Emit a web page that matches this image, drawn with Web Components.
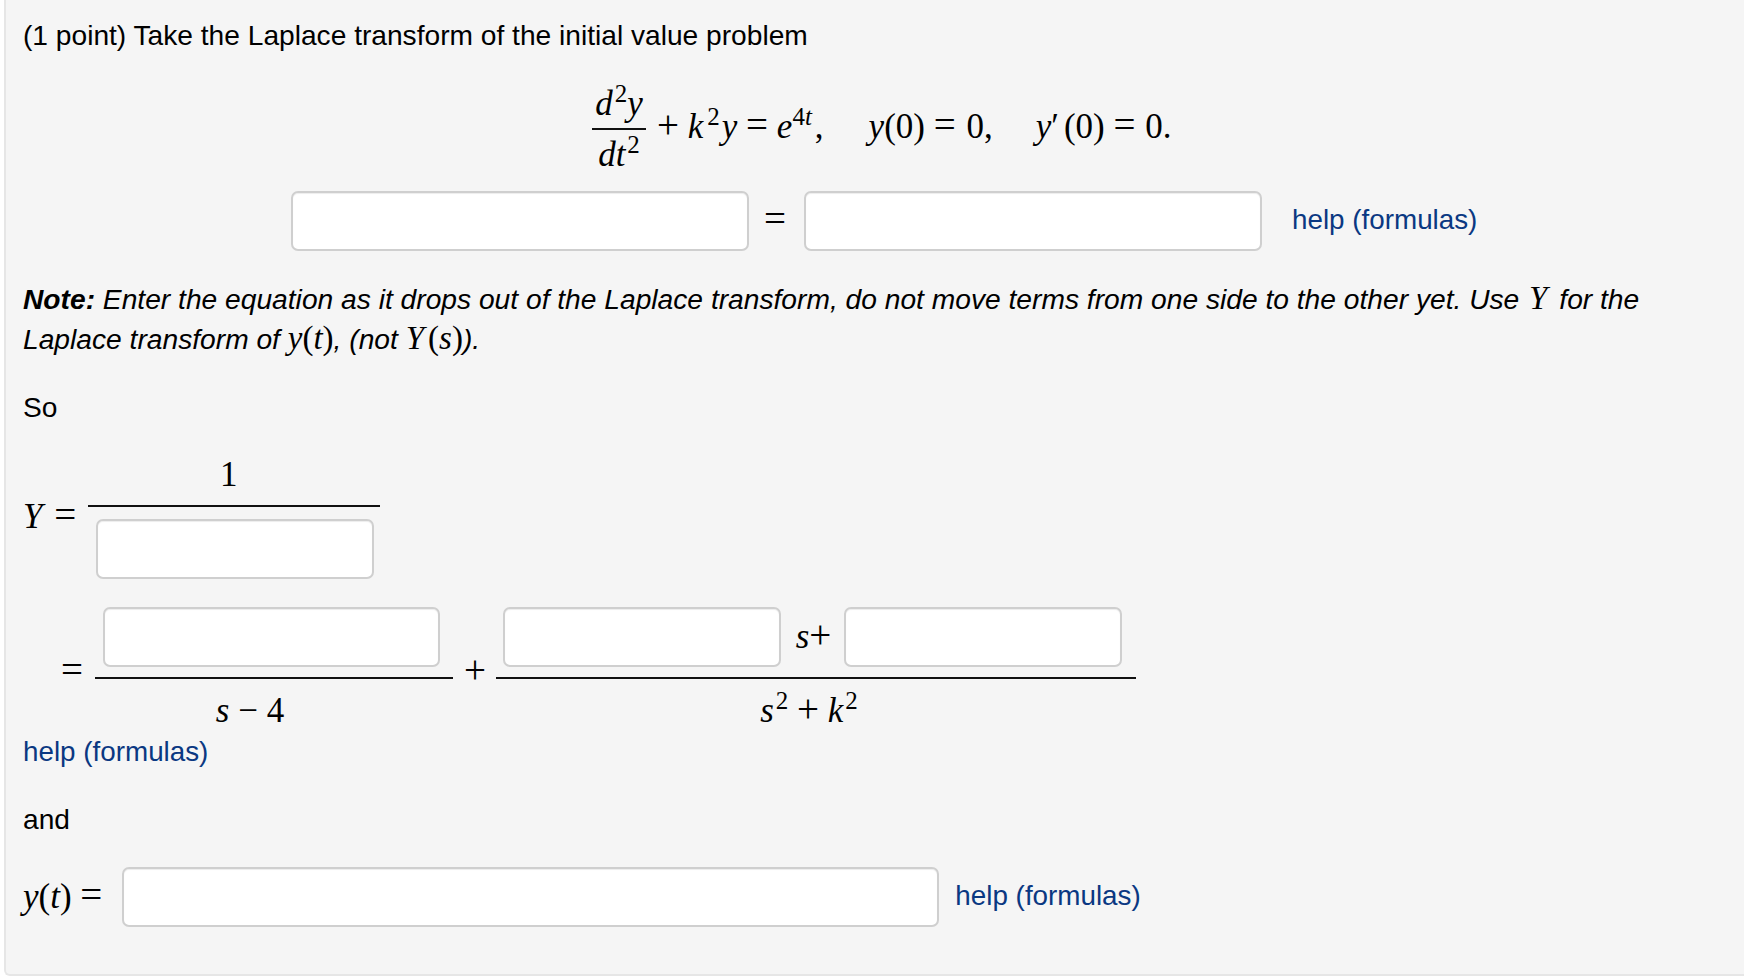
<!DOCTYPE html>
<html><head><meta charset="utf-8"><title>Laplace</title>
<style>html,body{margin:0;padding:0;background:#fff}</style></head><body>
<pg-panel>
<pg-text style="font-size:28.15px">(1 point) Take the Laplace transform of the initial value problem</pg-text>
<pg-row style="--mt:29px;--pl:569px;--h:88px">
  <pg-frac style="--w:54px;--nh:44px;--dh:44px;--dp:5px"><pg-math slot="num"><pg-v>d</pg-v><pg-sup>2</pg-sup><pg-v>y</pg-v></pg-math><pg-math slot="den"><pg-v>dt</pg-v><pg-sup>2</pg-sup></pg-math></pg-frac>
  <pg-math style="margin:0 0 4px 11px"><pg-op>+</pg-op> <pg-v>k</pg-v><pg-sup style="margin-left:4px;margin-right:2px">2</pg-sup><pg-v>y</pg-v> <pg-op>=</pg-op> <pg-v>e</pg-v><pg-sup style="margin-left:0"><span>4</span><pg-v>t</pg-v></pg-sup><pg-span style="display:inline;margin-left:3px">,</pg-span></pg-math>
  <pg-math style="margin:0 0 4px 45px"><pg-v>y</pg-v>(0) <pg-op style="margin-right:2px">=</pg-op> 0,</pg-math>
  <pg-math style="margin:0 0 4px 43px"><pg-v>y</pg-v>′<pg-span style="display:inline;margin-left:5px">(0)</pg-span> <pg-op style="margin-right:1px">=</pg-op> 0.</pg-math>
</pg-row>
<pg-row style="--mt:18px;--pl:268px;--h:60px">
  <pg-input style="--w:458px"></pg-input>
  <pg-math style="margin-left:15px;margin-right:18px"><pg-op>=</pg-op></pg-math>
  <pg-input style="--w:458px"></pg-input>
  <pg-help style="margin-left:30px;margin-bottom:3px;font-size:27.8px">help (formulas)</pg-help>
</pg-row>
<pg-text style="--mt:28px;font-style:italic;font-size:28.2px"><b>Note:</b> Enter the equation as it drops out of the Laplace transform, do not move terms from one side to the other yet. Use <pg-math inline style="margin:0 4px 0 2px"><pg-v>Y</pg-v></pg-math> for the<br>Laplace transform of <pg-math inline><pg-v>y</pg-v>(<pg-v>t</pg-v>)</pg-math>, (not <pg-math inline><pg-v>Y</pg-v><pg-span style="display:inline;margin-left:4px">(<pg-v>s</pg-v>)</pg-span></pg-math>).</pg-text>
<pg-text style="--mt:29px;font-size:28.15px">So</pg-text>
<pg-row style="--mt:27px;--pl:0px;--h:123px">
  <pg-math><pg-v>Y</pg-v> <pg-op style="margin-left:3px">=</pg-op></pg-math>
  <pg-frac style="--w:292px;--nh:50px;--dh:72px;--dp:0px;margin-left:12px"><pg-math slot="num" style="margin-right:11px">1</pg-math><pg-input slot="den" style="--w:278px;margin:12px 0 0 2px"></pg-input></pg-frac>
</pg-row>
<pg-row style="--mt:29px;--pl:38px;--h:124px">
  <pg-math style="margin-top:5px"><pg-op>=</pg-op></pg-math>
  <pg-frac style="--w:358px;--nh:70px;--dh:52px;--dp:12px;margin-left:12px"><pg-input slot="num" style="--w:337px;margin-right:6px"></pg-input><pg-math slot="den" style="margin-right:48px"><pg-v>s</pg-v> − 4</pg-math></pg-frac>
  <pg-math style="margin:5px 10px 0 11px"><pg-op>+</pg-op></pg-math>
  <pg-frac style="--w:640px;--nh:70px;--dh:52px;--dp:12px"><pg-span slot="num" style="margin-right:7px"><pg-input style="--w:278px"></pg-input><pg-math style="margin:0 13px 0 15px"><pg-v>s</pg-v><pg-op>+</pg-op></pg-math><pg-input style="--w:278px"></pg-input></pg-span><pg-math slot="den" style="margin-right:14px"><pg-v>s</pg-v><pg-sup>2</pg-sup> <pg-op>+</pg-op> <pg-v>k</pg-v><pg-sup>2</pg-sup></pg-math></pg-frac>
</pg-row>
<pg-text style="--mt:1px;font-size:27.8px"><pg-help>help (formulas)</pg-help></pg-text>
<pg-text style="--mt:28px;font-size:28.15px">and</pg-text>
<pg-row style="--mt:27px;--pl:0px;--h:60px">
  <pg-math style="margin-bottom:1px"><pg-v>y</pg-v>(<pg-v>t</pg-v>) <pg-op>=</pg-op></pg-math>
  <pg-input style="--w:817px;margin-left:20px"></pg-input>
  <pg-help style="margin-left:16px;margin-bottom:3px;font-size:27.8px">help (formulas)</pg-help>
</pg-row>
</pg-panel>
<script>
function def(name, css, html){
  customElements.define(name, class extends HTMLElement{
    constructor(){super();this.attachShadow({mode:'open'}).innerHTML='<style>'+css+'</style>'+html;}
  });
}
def('pg-panel',`:host{display:block;box-sizing:border-box;height:976px;margin-left:4px;padding:16px 0 0 17px;background:#f5f5f5;border-left:2px solid #e6e6e6;border-bottom:2px solid #e6e6e6;border-bottom-left-radius:6px;font:28px/40px "Liberation Sans",Arial,sans-serif;color:#000;overflow:hidden}`,'<slot></slot>');
def('pg-text',`:host{display:block;margin-top:var(--mt,0);white-space:nowrap}`,'<slot></slot>');
def('pg-row',`:host{display:flex;align-items:center;height:var(--h);margin-top:var(--mt,0);padding-left:var(--pl,0);white-space:nowrap}`,'<slot></slot>');
def('pg-span',`:host{display:flex;align-items:center}`,'<slot></slot>');
def('pg-math',`:host{display:inline-block;font:35px/40px "Liberation Serif","Times New Roman",serif;font-style:normal;white-space:pre;color:#000}:host([inline]){display:inline;font-size:33px;line-height:0}`,'<slot></slot>');
def('pg-v',`:host{display:inline;font-style:italic}`,'<slot></slot>');
def('pg-op',`:host{display:inline;font-size:39px;line-height:0;font-style:normal}`,'<slot></slot>');
def('pg-sup',`:host{display:inline;font-size:25px;line-height:0;vertical-align:13px;margin-left:2px}`,'<slot></slot>');
def('pg-help',`:host{display:inline-block;color:#0a3882;line-height:40px;cursor:pointer}`,'<slot></slot>');
def('pg-input',`:host{display:block;flex:none;width:var(--w);height:60px}input{display:block;box-sizing:border-box;width:100%;height:100%;margin:0;padding:0 8px;background:#fff;border:2px solid #cfcfcf;border-radius:7px;box-shadow:inset 0 1px 1px rgba(0,0,0,.075);outline:0}`,'<input type="text" aria-label="answer">');
def('pg-frac',`:host{display:inline-flex;flex:none;flex-direction:column;align-items:center;width:var(--w)}
.n{height:var(--nh);display:flex;align-items:flex-start;justify-content:center;width:100%}
.l{width:100%;height:2px;background:#111;flex:none}
.d{height:var(--dh);display:flex;align-items:flex-start;justify-content:center;width:100%;padding-top:var(--dp,0);box-sizing:border-box}`,
'<div class="n"><slot name="num"></slot></div><div class="l"></div><div class="d"><slot name="den"></slot></div>');
</script>
</body></html>
